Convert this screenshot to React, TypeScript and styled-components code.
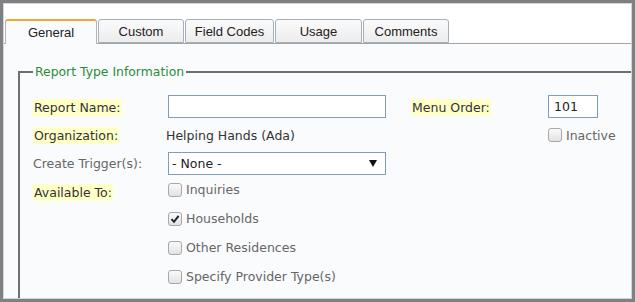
import React from 'react'
import styled, { createGlobalStyle } from 'styled-components'

const GlobalStyle = createGlobalStyle`
  html, body {
    margin: 0;
    padding: 0;
    background: #ffffff;
  }
`

const Frame = styled.div`
  width: 635px;
  height: 302px;
  box-sizing: border-box;
  border: 3px solid #808080;
  overflow: hidden;
  background: #ffffff;
`

const Inner = styled.div`
  height: 100%;
  box-sizing: border-box;
  border: 1px solid #cdd5e1;
  overflow: hidden;
  display: flex;
  flex-direction: column;
`

const TabBar = styled.div`
  display: flex;
  align-items: flex-end;
  gap: 1px;
  padding: 15px 0 0 1px;
  border-bottom: 1px solid #a3a3a3;
  background: #ffffff;
`

const Tab = styled.div<{ $active?: boolean; $width: number }>`
  box-sizing: border-box;
  width: ${p => p.$width}px;
  margin-bottom: ${p => (p.$active ? '-1px' : '0')};
  height: ${p => (p.$active ? '25px' : '24px')};
  display: flex;
  align-items: center;
  justify-content: center;
  font-family: 'Liberation Sans', Arial, sans-serif;
  font-size: 13px;
  color: #222222;
  border: 1px solid ${p => (p.$active ? '#b4b4b4' : '#a5b0bd')};
  border-top: ${p => (p.$active ? '2px solid #f2a531' : '1px solid #a5b0bd')};
  border-bottom: ${p => (p.$active ? 'none' : '1px solid #a5b0bd')};
  border-radius: 3px 3px 0 0;
  background: ${p => (p.$active ? '#fafbfd' : 'linear-gradient(#fbfbfb, #ececec)')};
  padding-bottom: ${p => (p.$active ? '1px' : '0')};
`

const Panel = styled.div`
  flex: 1;
  background: #fafbfd;
  padding: 20px 0 0 14px;
`

const Fieldset = styled.fieldset`
  margin: 0;
  width: 700px;
  height: 400px;
  box-sizing: border-box;
  border: 2px solid #6f6f6f;
  padding: 15px 0 0 13px;
`

const Legend = styled.legend`
  padding: 0 2px;
  line-height: 16px;
  font-family: 'DejaVu Sans', Verdana, sans-serif;
  font-size: 12.4px;
  color: #2e8b3a;
`

const FormGrid = styled.div`
  display: grid;
  grid-template-columns: 135px 243px 137px 90px;
  grid-template-rows: 23px 34px 23px repeat(4, 29px);
  align-items: center;
  font-family: 'DejaVu Sans', Verdana, sans-serif;
  font-size: 12.5px;
`

const Label = styled.div<{ $muted?: boolean; $shift?: number }>`
  color: ${p => (p.$muted ? '#666666' : '#333333')};
  position: relative;
  top: ${p => p.$shift ?? 0}px;
`

const Mark = styled.span`
  background: #ffffc8;
  padding: 1px 1px;
`

const Value = styled.div`
  color: #333333;
  margin-left: -2px;
`

const TextInput = styled.div<{ $width: number }>`
  box-sizing: border-box;
  width: ${p => p.$width}px;
  height: 23px;
  border: 1px solid #7f9db9;
  background: #ffffff;
  padding: 0 5px;
  display: flex;
  align-items: center;
  color: #222222;
`

const Select = styled(TextInput)`
  justify-content: space-between;
  padding: 0 8px 0 3px;
`

const CheckRow = styled.label`
  display: flex;
  align-items: center;
  gap: 4px;
  color: #666666;
  white-space: nowrap;
`

const Box = styled.span`
  flex-shrink: 0;
  box-sizing: border-box;
  width: 14px;
  height: 14px;
  border: 1px solid #a8a8a8;
  border-radius: 3px;
  background: linear-gradient(#fafafa, #e2e2e2);
  display: flex;
  align-items: center;
  justify-content: center;
`

const Check: React.FC<{ checked?: boolean; label: string }> = ({ checked, label }) => (
  <CheckRow>
    <Box>
      {checked && (
        <svg width="10" height="10" viewBox="0 0 10 10">
          <path d="M1.5 5.2 L4 7.8 L8.6 1.8" fill="none" stroke="#222" strokeWidth="1.9" />
        </svg>
      )}
    </Box>
    {label}
  </CheckRow>
)

const tabs = [
  { name: 'General', width: 92, active: true },
  { name: 'Custom', width: 86 },
  { name: 'Field Codes', width: 89 },
  { name: 'Usage', width: 87 },
  { name: 'Comments', width: 86 },
]

export default function App() {
  return (
    <>
      <GlobalStyle />
      <Frame>
        <Inner>
          <TabBar>
            {tabs.map(t => (
              <Tab key={t.name} $active={t.active} $width={t.width}>{t.name}</Tab>
            ))}
          </TabBar>
          <Panel>
            <Fieldset>
              <Legend>Report Type Information</Legend>
              <FormGrid>
                <Label $shift={1}><Mark>Report Name:</Mark></Label>
                <TextInput $width={218} />
                <Label $shift={1}><Mark>Menu Order:</Mark></Label>
                <TextInput $width={50}>101</TextInput>

                <Label><Mark>Organization:</Mark></Label>
                <Value>Helping Hands (Ada)</Value>
                <div />
                <Check label="Inactive" />

                <Label $muted>Create Trigger(s):</Label>
                <Select $width={218}>
                  - None -
                  <svg width="8" height="7" viewBox="0 0 8 7">
                    <polygon points="0,0 8,0 4,7" fill="#111" />
                  </svg>
                </Select>
                <div />
                <div />

                <Label $shift={3}><Mark>Available To:</Mark></Label>
                <Check label="Inquiries" />
                <div />
                <div />

                <div />
                <Check checked label="Households" />
                <div />
                <div />

                <div />
                <Check label="Other Residences" />
                <div />
                <div />

                <div />
                <Check label="Specify Provider Type(s)" />
                <div />
                <div />
              </FormGrid>
            </Fieldset>
          </Panel>
        </Inner>
      </Frame>
    </>
  )
}
